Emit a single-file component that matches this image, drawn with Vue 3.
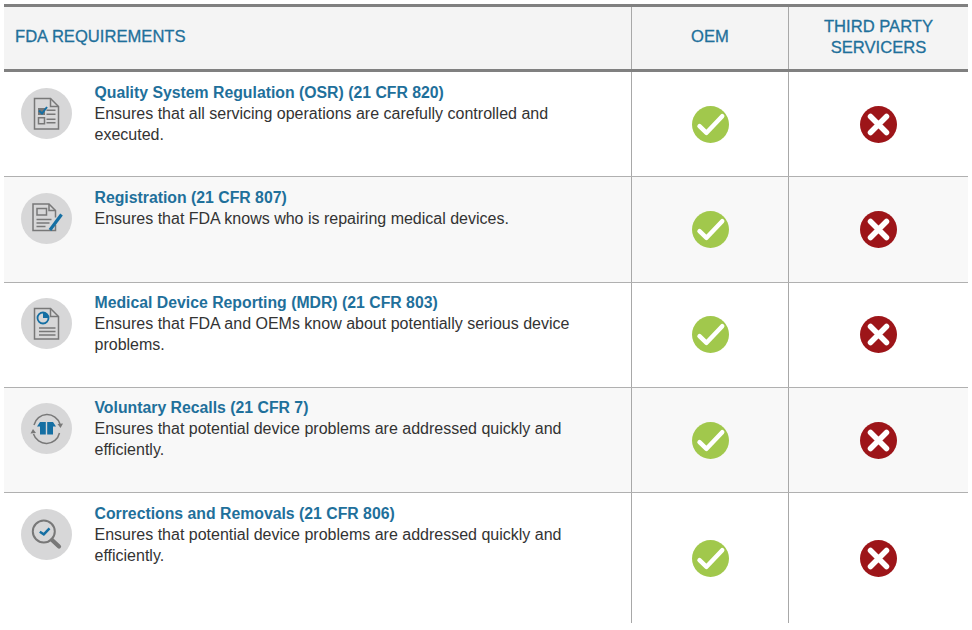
<script setup>
const rows = [
  {
    icon: "checklist",
    title: "Quality System Regulation (OSR) (21 CFR 820)",
    text: "Ensures that all servicing operations are carefully controlled and executed.",
  },
  {
    icon: "register",
    title: "Registration (21 CFR 807)",
    text: "Ensures that FDA knows who is repairing medical devices.",
  },
  {
    icon: "report",
    title: "Medical Device Reporting (MDR) (21 CFR 803)",
    text: "Ensures that FDA and OEMs know about potentially serious device problems.",
  },
  {
    icon: "recall",
    title: "Voluntary Recalls (21 CFR 7)",
    text: "Ensures that potential device problems are addressed quickly and efficiently.",
  },
  {
    icon: "search",
    title: "Corrections and Removals (21 CFR 806)",
    text: "Ensures that potential device problems are addressed quickly and efficiently.",
  },
];
</script>

<template>
  <div class="page">
    <div class="table">
      <div class="head">
        <div class="cell req">FDA REQUIREMENTS</div>
        <div class="cell col">OEM</div>
        <div class="cell col">THIRD PARTY<br />SERVICERS</div>
      </div>

      <div v-for="row in rows" :key="row.icon" class="row">
        <div class="cell info">
          <svg class="icon" viewBox="0 0 51 51">
            <circle cx="25.5" cy="25.5" r="25.5" fill="#d7d7d8" />
            <g fill="none" stroke="#787878" stroke-width="1.5">
              <template v-if="row.icon === 'checklist'">
                <path d="M13.500 10.500h16l8 8v22.500h-24z" />
                <path d="M29.500 10.500v8h8" />
                <path d="M17.500 29.700h6v6h-6zM25.500 22.300h9M25.500 26.300h9M25.500 31.300h9M25.500 34.700h9" />
                <rect x="17" y="20" width="7" height="7" fill="#787878" stroke="none" />
                <path d="M18 22.500l3 3 5-6.500" stroke="#156fa3" stroke-width="2" />
              </template>
              <template v-else-if="row.icon === 'register'">
                <path d="M34.500 32v5.500h-22.500v-26.500h16l6.500 6.500v7" />
                <path d="M28 11v6.500h6.500" />
                <path d="M16 15.500h9.500v6.500h-9.500zM15.500 26.500h15M15.500 30h13M15.500 33.500h9" />
                <path d="M29 37l11.500-15.500" stroke="#156fa3" stroke-width="3.200" />
              </template>
              <template v-else-if="row.icon === 'report'">
                <path d="M13.500 10.500h16l8 8v22.500h-24z" />
                <path d="M29.500 10.500v8h8" />
                <path d="M18 30h16.500M18 33.500h16.500M18 37h16.500" />
                <circle cx="22" cy="20" r="5.500" stroke="#156fa3" stroke-width="1.800" />
                <path d="M22 20v-5.500a5.500 5.500 0 0 1 5.500 5.500z" fill="#156fa3" stroke="none" />
              </template>
              <template v-else-if="row.icon === 'recall'">
                <path d="M13 22a13.500 13.500 0 0 1 26-1" />
                <path d="M38.500 30a13.500 13.500 0 0 1-26 1" />
                <path d="M36.500 21l3 4 2.500-4.500z" fill="#787878" stroke="none" />
                <path d="M15 30l-3-4-2.500 4.500z" fill="#787878" stroke="none" />
                <path d="M24.800 19l-3 0h-2.800l-3 4.500h3v8h5.800zM26.200 19h5.800l3 4.500h-3v8h-5.800z" fill="#156fa3" stroke="none" />
              </template>
              <template v-else>
                <circle cx="22.800" cy="22.500" r="11" stroke-width="2" />
                <path d="M31 31l7 6.500" stroke-width="4.200" stroke-linecap="round" />
                <path d="M18.800 22.700l4 2.600 5.700-6" stroke="#156fa3" stroke-width="2.500" />
              </template>
            </g>
          </svg>
          <div>
            <h3>{{ row.title }}</h3>
            <p>{{ row.text }}</p>
          </div>
        </div>
        <div class="cell mark">
          <svg viewBox="0 0 37 37" width="37" height="37">
            <circle cx="18.500" cy="18.500" r="18.500" fill="#a1c84c" />
            <path d="M7.500 20.200l7 6.600 15.700-16.600" fill="none" stroke="#fff" stroke-width="4.500" stroke-linecap="round" stroke-linejoin="round" />
          </svg>
        </div>
        <div class="cell mark">
          <svg viewBox="0 0 37 37" width="37" height="37">
            <circle cx="18.500" cy="18.500" r="18.500" fill="#9d1519" />
            <path d="M10.500 10.500l16 16M26.500 10.500l-16 16" fill="none" stroke="#fff" stroke-width="5.500" stroke-linecap="round" />
          </svg>
        </div>
      </div>
    </div>
  </div>
</template>

<style scoped>
.page {
  padding: 4px 4px 0;
  font-family: "Liberation Sans", Arial, sans-serif;
  color: #333;
}

.table {
  width: 964px;
}

.head,
.row {
  display: grid;
  grid-template-columns: 627px 157px 180px;
}

.head {
  height: 68px;
  box-sizing: border-box;
  background: #f4f4f4;
  border-top: 3px solid #808080;
  border-bottom: 3px solid #808080;
  color: #1f709b;
  font-size: 16.6px;
  line-height: 21px;
  -webkit-text-stroke: 0.3px #1f709b;
}

.row {
  height: 105.3px;
  box-sizing: border-box;
  border-bottom: 1px solid #b0b0b0;
}

.row:nth-child(odd) {
  background: #f8f8f8;
}

.row:last-child {
  height: 130px;
  border-bottom: 0;
}

.cell {
  box-sizing: border-box;
}

.cell + .cell {
  border-left: 1px solid #a8a8a8;
}

.req {
  display: flex;
  align-items: center;
  padding: 0 0 3px 11px;
}

.col {
  display: flex;
  align-items: center;
  justify-content: center;
  padding-bottom: 3px;
  text-align: center;
}

.info {
  display: flex;
  gap: 23px;
  padding: 9.500px 0 0 16.500px;
}

.icon {
  width: 51px;
  height: 51px;
  flex: none;
  margin-top: 6px;
}

h3 {
  margin: 0;
  color: #1f709b;
  font-size: 15.8px;
  font-weight: 700;
  line-height: 21px;
}

p {
  margin: 0;
  max-width: 480px;
  font-size: 16px;
  line-height: 21px;
}

.mark {
  display: flex;
  align-items: center;
  justify-content: center;
}
</style>
